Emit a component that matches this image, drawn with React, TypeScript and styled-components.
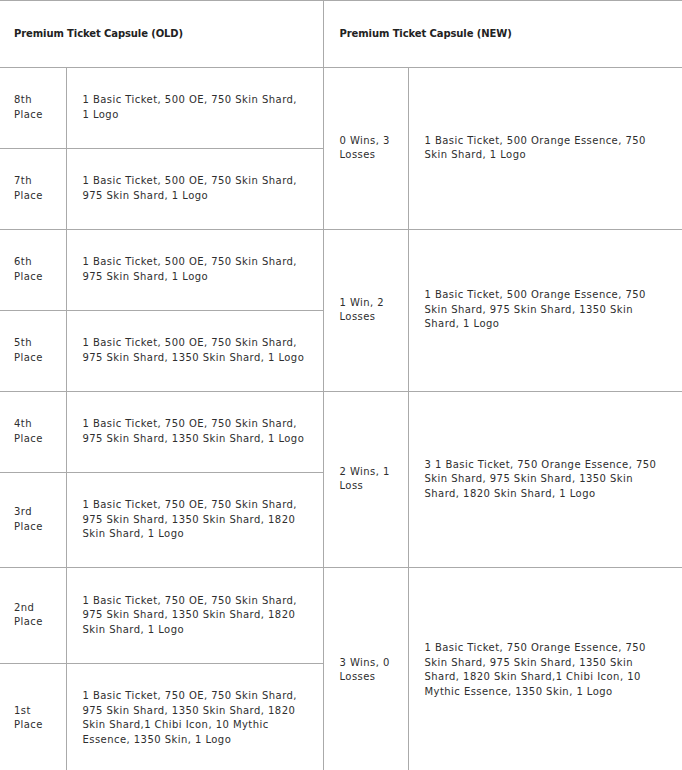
import React from "react";
import styled, { createGlobalStyle } from "styled-components";

const GlobalStyle = createGlobalStyle`
  html, body {
    margin: 0;
    padding: 0;
    background: #ffffff;
  }
`;

const Table = styled.table`
  width: 682px;
  table-layout: fixed;
  border-collapse: collapse;
  font-family: "DejaVu Sans", "Liberation Sans", sans-serif;
  font-size: 10px;
  line-height: 14.5px;
  letter-spacing: 0.45px;
  color: #2e2e2e;
  border-top: 1px solid #aaaaaa;
`;

const Col = styled.col<{ $w: number }>`
  width: ${(p) => p.$w}px;
`;

const HeaderCell = styled.th<{ $first?: boolean }>`
  text-align: left;
  font-weight: 700;
  letter-spacing: -0.1px;
  color: #222222;
  padding: 25.5px 16px 25.5px ${(p) => (p.$first ? "14px" : "16px")};
  border-bottom: 1px solid #aaaaaa;
  border-left: ${(p) => (p.$first ? "none" : "1px solid #aaaaaa")};
`;

const Cell = styled.td<{ $first?: boolean }>`
  vertical-align: middle;
  padding: 25.5px 16px 25.5px ${(p) => (p.$first ? "14px" : "16px")};
  border-bottom: 1px solid #aaaaaa;
  border-left: ${(p) => (p.$first ? "none" : "1px solid #aaaaaa")};
`;

type OldRow = { place: string; reward: string };
type NewRow = { record: string; reward: string };

const oldRows: OldRow[] = [
  { place: "8th Place", reward: "1 Basic Ticket, 500 OE, 750 Skin Shard, 1 Logo" },
  { place: "7th Place", reward: "1 Basic Ticket, 500 OE, 750 Skin Shard, 975 Skin Shard, 1 Logo" },
  { place: "6th Place", reward: "1 Basic Ticket, 500 OE, 750 Skin Shard, 975 Skin Shard, 1 Logo" },
  { place: "5th Place", reward: "1 Basic Ticket, 500 OE, 750 Skin Shard, 975 Skin Shard, 1350 Skin Shard, 1 Logo" },
  { place: "4th Place", reward: "1 Basic Ticket, 750 OE, 750 Skin Shard, 975 Skin Shard, 1350 Skin Shard, 1 Logo" },
  { place: "3rd Place", reward: "1 Basic Ticket, 750 OE, 750 Skin Shard, 975 Skin Shard, 1350 Skin Shard, 1820 Skin Shard, 1 Logo" },
  { place: "2nd Place", reward: "1 Basic Ticket, 750 OE, 750 Skin Shard, 975 Skin Shard, 1350 Skin Shard, 1820 Skin Shard, 1 Logo" },
  {
    place: "1st Place",
    reward:
      "1 Basic Ticket, 750 OE, 750 Skin Shard, 975 Skin Shard, 1350 Skin Shard, 1820 Skin Shard,1 Chibi Icon, 10 Mythic Essence, 1350 Skin, 1 Logo",
  },
];

const newRows: NewRow[] = [
  { record: "0 Wins, 3 Losses", reward: "1 Basic Ticket, 500 Orange Essence, 750 Skin Shard, 1 Logo" },
  { record: "1 Win, 2 Losses", reward: "1 Basic Ticket, 500 Orange Essence, 750 Skin Shard, 975 Skin Shard, 1350 Skin Shard, 1 Logo" },
  {
    record: "2 Wins, 1 Loss",
    reward: "3 1 Basic Ticket, 750 Orange Essence, 750 Skin Shard, 975 Skin Shard, 1350 Skin Shard, 1820 Skin Shard, 1 Logo",
  },
  {
    record: "3 Wins, 0 Losses",
    reward:
      "1 Basic Ticket, 750 Orange Essence, 750 Skin Shard, 975 Skin Shard, 1350 Skin Shard, 1820 Skin Shard,1 Chibi Icon, 10 Mythic Essence, 1350 Skin, 1 Logo",
  },
];

function App() {
  return (
    <>
      <GlobalStyle />
      <Table>
        <colgroup>
          <Col $w={66} />
          <Col $w={257} />
          <Col $w={85} />
          <Col $w={274} />
        </colgroup>
        <thead>
          <tr>
            <HeaderCell colSpan={2} $first>
              Premium Ticket Capsule (OLD)
            </HeaderCell>
            <HeaderCell colSpan={2}>Premium Ticket Capsule (NEW)</HeaderCell>
          </tr>
        </thead>
        <tbody>
          {oldRows.map((row, i) => {
            const paired = i % 2 === 0 ? newRows[i / 2] : null;
            return (
              <tr key={row.place}>
                <Cell $first>{row.place}</Cell>
                <Cell>{row.reward}</Cell>
                {paired && (
                  <>
                    <Cell rowSpan={2}>{paired.record}</Cell>
                    <Cell rowSpan={2}>{paired.reward}</Cell>
                  </>
                )}
              </tr>
            );
          })}
        </tbody>
      </Table>
    </>
  );
}

export default App;
